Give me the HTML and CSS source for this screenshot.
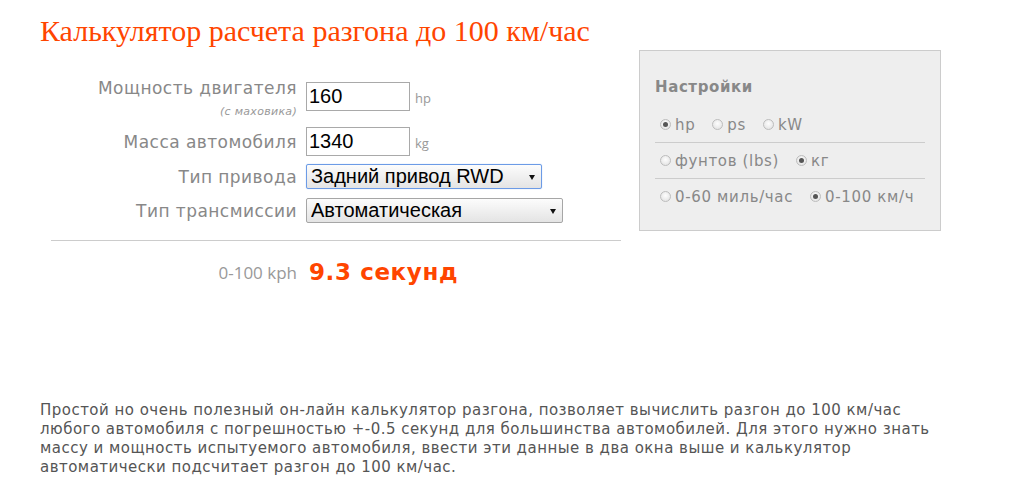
FILE: index.html
```html
<!DOCTYPE html>
<html lang="ru">
<head>
<meta charset="utf-8">
<title>Калькулятор расчета разгона до 100 км/час</title>
<link rel="stylesheet" href="styles.css">
</head>
<body>
<div class="page">
  <h1 class="title">Калькулятор расчета разгона до 100 км/час</h1>
  <div class="main">
    <div class="calc">
      <div class="row row-power">
        <div class="label-cell">
          <div class="label">Мощность двигателя</div>
          <div class="sublabel">(с маховика)</div>
        </div>
        <div class="field-cell">
          <input class="num" type="text" value="160"><span class="unit">hp</span>
        </div>
      </div>
      <div class="row row-mass">
        <div class="label-cell"><div class="label">Масса автомобиля</div></div>
        <div class="field-cell">
          <input class="num" type="text" value="1340"><span class="unit">kg</span>
        </div>
      </div>
      <div class="row row-drive">
        <div class="label-cell"><div class="label">Тип привода</div></div>
        <div class="field-cell">
          <span class="select-wrap focused drive"><select class="sel"><option>Задний привод RWD</option></select></span>
        </div>
      </div>
      <div class="row row-trans">
        <div class="label-cell"><div class="label">Тип трансмиссии</div></div>
        <div class="field-cell">
          <span class="select-wrap trans"><select class="sel"><option>Автоматическая</option></select></span>
        </div>
      </div>
      <hr class="divider">
      <div class="row row-result">
        <div class="label-cell"><div class="result-label">0-100 kph</div></div>
        <div class="field-cell"><div class="result-value">9.3 секунд</div></div>
      </div>
    </div>
    <div class="settings">
      <div class="settings-title">Настройки</div>
      <div class="opt-row">
        <span class="opt"><span class="radio checked"></span>hp</span>
        <span class="opt"><span class="radio"></span>ps</span>
        <span class="opt"><span class="radio"></span>kW</span>
      </div>
      <div class="opt-row sep">
        <span class="opt"><span class="radio"></span>фунтов (lbs)</span>
        <span class="opt"><span class="radio checked"></span>кг</span>
      </div>
      <div class="opt-row sep">
        <span class="opt"><span class="radio"></span>0-60 миль/час</span>
        <span class="opt"><span class="radio checked"></span>0-100 км/ч</span>
      </div>
    </div>
  </div>
  <p class="desc">Простой но очень полезный он-лайн калькулятор разгона, позволяет вычислить разгон до 100 км/час любого автомобиля с погрешностью +-0.5 секунд для большинства автомобилей. Для этого нужно знать массу и мощность испытуемого автомобиля, ввести эти данные в два окна выше и калькулятор автоматически подсчитает разгон до 100 км/час.</p>
</div>
</body>
</html>
```
FILE: styles.css
```css
html, body {
  margin: 0;
  padding: 0;
  background: #fff;
}
.page {
  padding: 12px 0 0 40px;
  font-family: "DejaVu Sans", Verdana, sans-serif;
}
.title {
  margin: 0;
  font-family: "Liberation Serif", "Times New Roman", serif;
  font-weight: normal;
  font-size: 30px;
  line-height: 38px;
  color: #ff4500;
}
.main {
  display: flex;
  align-items: flex-start;
}
.calc {
  margin-left: 11px;
  width: 570px;
  padding-top: 28px;
}
.row {
  display: grid;
  grid-template-columns: 246px auto;
  column-gap: 9px;
  align-items: center;
}
.label-cell {
  text-align: right;
}
.label {
  font-size: 17px;
  line-height: 20px;
  letter-spacing: 0.45px;
  color: #888;
  white-space: nowrap;
}
.sublabel {
  font-size: 11px;
  line-height: 12px;
  font-style: italic;
  letter-spacing: 0.3px;
  color: #999;
  margin-top: 8px;
}
.row-power {
  align-items: start;
}
.row-power .field-cell {
  padding-top: 4px;
}
.row-mass { margin-top: 9px; }
.row-drive { margin-top: 8px; }
.row-trans { margin-top: 9px; }
.field-cell {
  display: flex;
  align-items: center;
}
.num {
  box-sizing: border-box;
  width: 104px;
  height: 29px;
  border: 1px solid #a9a9a9;
  padding: 1px 2px;
  font-family: "Liberation Sans", Arial, sans-serif;
  font-size: 20px;
  color: #000;
  outline: none;
  margin: 0;
}
.unit {
  margin-left: 5px;
  font-family: "Open Sans", sans-serif;
  font-size: 13px;
  color: #999;
  position: relative;
  top: 1px;
}
.select-wrap {
  position: relative;
  display: inline-block;
  box-sizing: border-box;
  height: 25px;
  border: 1px solid #a6a6a6;
  border-radius: 2px;
  background: linear-gradient(#fcfcfc, #e4e4e4);
}
.select-wrap.drive { width: 236px; }
.select-wrap.trans { width: 257px; }
.select-wrap.focused {
  border-color: #6c9be6;
  box-shadow: 0 0 1px #8ab4f0;
}
.select-wrap::after {
  content: "";
  position: absolute;
  right: 6px;
  top: 10px;
  border-left: 3px solid transparent;
  border-right: 3px solid transparent;
  border-top: 5px solid #111;
}
.sel {
  -webkit-appearance: none;
  appearance: none;
  border: 0;
  background: transparent;
  width: 100%;
  height: 23px;
  padding: 0 0 0 4px;
  margin: 0;
  font-family: "Liberation Sans", Arial, sans-serif;
  font-size: 20px;
  line-height: 23px;
  color: #000;
  outline: none;
}
.divider {
  border: 0;
  border-top: 1px solid #ccc;
  margin: 17px 0 0 0;
  height: 0;
}
.row-result {
  margin-top: 17px;
}
.result-label {
  font-family: "Open Sans", sans-serif;
  font-size: 17px;
  color: #999;
}
.result-value {
  margin-left: 3px;
  font-size: 23px;
  font-weight: bold;
  letter-spacing: 0.6px;
  color: #ff4500;
  line-height: 28px;
}
.settings {
  margin-left: 18px;
  margin-top: 0;
  box-sizing: border-box;
  width: 302px;
  height: 181px;
  background: #eee;
  border: 1px solid #ccc;
  padding: 26px 15px 0 15px;
  color: #888;
}
.settings-title {
  font-size: 15px;
  font-weight: bold;
  line-height: 20px;
  letter-spacing: 0.6px;
  color: #888;
  margin-bottom: 10px;
}
.opt-row {
  display: flex;
  align-items: center;
  height: 35px;
  font-size: 15px;
  letter-spacing: 0.65px;
  padding-left: 5px;
}
.opt-row.sep {
  border-top: 1px solid #ccc;
}
.opt {
  display: inline-flex;
  align-items: center;
  margin-right: 17px;
  white-space: nowrap;
}
.radio {
  box-sizing: border-box;
  width: 11px;
  height: 11px;
  border: 1px solid #bdbdbd;
  border-radius: 50%;
  background: radial-gradient(circle at 50% 40%, #fdfdfd, #dedede);
  margin-right: 4px;
  position: relative;
}
.radio.checked::after {
  content: "";
  position: absolute;
  left: 2px;
  top: 2px;
  width: 5px;
  height: 5px;
  border-radius: 50%;
  background: #555;
}
.desc {
  margin: 115px 0 0 0;
  width: 900px;
  font-size: 15px;
  line-height: 19px;
  letter-spacing: 0.48px;
  color: #555;
}
```
